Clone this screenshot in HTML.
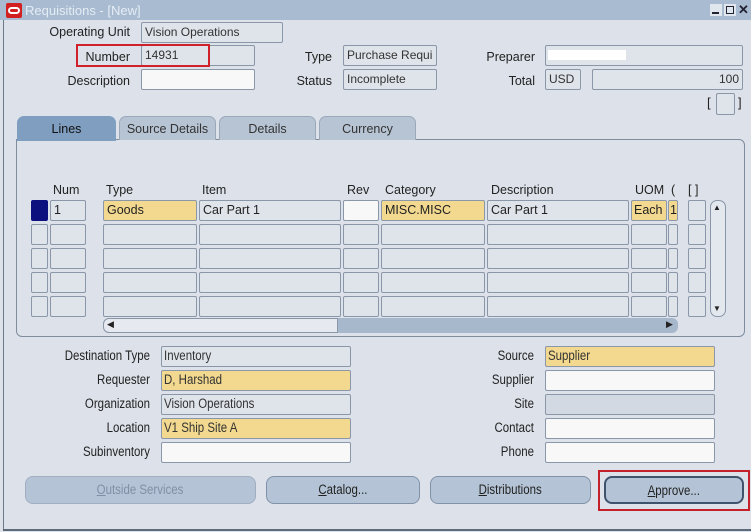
<!DOCTYPE html>
<html><head><style>
*{box-sizing:border-box;margin:0;padding:0}
body{width:751px;height:532px;overflow:hidden;background:#dde2ea;font-family:"Liberation Sans",sans-serif;font-size:12px;color:#222;position:relative}
.a{position:absolute}
.f{position:absolute;height:21px;border:1px solid #8a97a8;border-radius:2px;background:#dfe3ea;padding:2px 3px;font-size:12px;white-space:nowrap;overflow:hidden;color:#333}
.c{position:absolute;height:21px;border:1px solid #8a97a8;border-radius:2px;background:#dfe3ea;padding:2px 3px;font-size:12.5px;overflow:hidden;white-space:nowrap}
.y{background:#f2d98f !important}
.w{background:#f8f8f8 !important}
.l{position:absolute;text-align:right;font-size:12.5px;color:#222}
.ln{position:absolute;text-align:right;font-size:13.5px;color:#222;transform:scaleX(.85);transform-origin:right}
.bf{font-size:13.5px;padding:1px 2px}
.bf span{display:inline-block;transform:scaleX(.85);transform-origin:left}
.tab{position:absolute;top:116px;height:24px;background:#b7c4d4;border:1px solid #9aa8ba;border-bottom:none;border-radius:7px 7px 0 0;text-align:center;padding-top:5px;font-size:12.5px;color:#333}
.btn{position:absolute;top:476px;height:28px;border:1px solid #8092a8;border-radius:8px;background:#b4c4d6;text-align:center;padding-top:5px;font-size:13.5px;color:#222}
.btn span{display:inline-block;transform:scaleX(.85)}
.h{position:absolute;top:183px;font-size:12.5px;color:#222}
</style></head><body>
<div class="a" style="left:0;top:0;width:751px;height:20px;background:#a9bbd0"></div>
<div class="a" style="left:6px;top:3px;width:16px;height:15px;background:#d21f1f;border-radius:2px"><div class="a" style="left:2px;top:4px;width:12px;height:7px;border:2px solid #fff;border-radius:4px"></div></div>
<div class="a" style="left:25px;top:3px;color:#e4ecf4;font-size:13px">Requisitions - [New]</div>
<div class="a" style="left:710px;top:4px;width:12px;height:12px;background:#dfe6ee"><div class="a" style="left:2px;top:8px;width:7px;height:2px;background:#223"></div></div>
<div class="a" style="left:724px;top:4px;width:12px;height:12px;background:#dfe6ee"><div class="a" style="left:2px;top:2px;width:8px;height:8px;border:1.5px solid #223"></div></div>
<div class="a" style="left:738px;top:2px;font-weight:bold;font-size:13px;color:#223">✕</div>
<div class="a" style="left:3px;top:20px;width:1px;height:510px;background:#6d7a8a"></div>
<div class="a" style="left:3px;top:529px;width:748px;height:2px;background:#5d6a7a"></div>

<div class="l" style="left:20px;top:25px;width:110px">Operating Unit</div>
<div class="f" style="left:141px;top:22px;width:142px">Vision Operations</div>
<div class="l" style="left:20px;top:50px;width:110px">Number</div>
<div class="f" style="left:141px;top:45px;width:114px">14931</div>
<div class="a" style="left:76px;top:44px;width:134px;height:23px;border:2px solid #d0202a"></div>
<div class="l" style="left:20px;top:74px;width:110px">Description</div>
<div class="f w" style="left:141px;top:69px;width:114px"></div>

<div class="l" style="left:260px;top:50px;width:72px">Type</div>
<div class="f" style="left:343px;top:45px;width:94px">Purchase Requi</div>
<div class="l" style="left:260px;top:74px;width:72px">Status</div>
<div class="f" style="left:343px;top:69px;width:94px">Incomplete</div>

<div class="l" style="left:450px;top:50px;width:85px">Preparer</div>
<div class="f" style="left:545px;top:45px;width:198px"><div class="a" style="left:2px;top:4px;width:78px;height:10px;background:#fff"></div></div>
<div class="l" style="left:450px;top:74px;width:85px">Total</div>
<div class="f" style="left:545px;top:69px;width:36px">USD</div>
<div class="f" style="left:592px;top:69px;width:151px;text-align:right">100</div>
<div class="a" style="left:707px;top:95px;font-size:13px">[</div>
<div class="f" style="left:716px;top:93px;width:19px;height:22px"></div>
<div class="a" style="left:738px;top:95px;font-size:13px">]</div>

<div class="a" style="left:16px;top:139px;width:729px;height:198px;border:1px solid #7f8c9c;border-radius:0 6px 6px 6px"></div>
<div class="tab" style="left:17px;width:99px;background:#7f9ec0;border-color:#7f9ec0;color:#111">Lines</div>
<div class="tab" style="left:119px;width:97px">Source Details</div>
<div class="tab" style="left:219px;width:97px">Details</div>
<div class="tab" style="left:319px;width:97px">Currency</div>
<div class="a" style="left:17px;top:139px;width:99px;height:2px;background:#7f9ec0"></div>

<div class="h" style="left:53px">Num</div>
<div class="h" style="left:106px">Type</div>
<div class="h" style="left:202px">Item</div>
<div class="h" style="left:347px">Rev</div>
<div class="h" style="left:385px">Category</div>
<div class="h" style="left:491px">Description</div>
<div class="h" style="left:635px">UOM</div>
<div class="h" style="left:671px">(</div>
<div class="h" style="left:688px">[ ]</div>

<div class="a" style="left:31px;top:200px;width:17px;height:21px;background:#0c0f7e;border-radius:2px"></div>
<div class="c" style="left:50px;top:200px;width:36px">1</div>
<div class="c y" style="left:103px;top:200px;width:94px">Goods</div>
<div class="c" style="left:199px;top:200px;width:142px">Car Part 1</div>
<div class="c w" style="left:343px;top:200px;width:36px"></div>
<div class="c y" style="left:381px;top:200px;width:104px">MISC.MISC</div>
<div class="c" style="left:487px;top:200px;width:142px">Car Part 1</div>
<div class="c y" style="left:631px;top:200px;width:36px;padding:2px 2px">Each</div>
<div class="c y" style="left:668px;top:200px;width:10px;padding:2px 1px">1</div>
<div class="c" style="left:688px;top:200px;width:18px"></div>

<div id="rows"></div>
<script>
var r='';[224,248,272,296].forEach(function(t){
[[31,17],[50,36],[103,94],[199,142],[343,36],[381,104],[487,142],[631,36],[668,10],[688,18]].forEach(function(c){
r+='<div class="c" style="left:'+c[0]+'px;top:'+t+'px;width:'+c[1]+'px"></div>';});});
document.getElementById('rows').innerHTML=r;
</script>
<div class="a" style="left:710px;top:200px;width:16px;height:117px;border:1px solid #8a97a8;border-radius:7px;background:#e3e7ee"></div>
<div class="a" style="left:713px;top:203px;font-size:8px">▲</div>
<div class="a" style="left:713px;top:304px;font-size:8px">▼</div>
<div class="a" style="left:103px;top:318px;width:575px;height:15px;background:#a8b8cc;border-radius:6px"></div>
<div class="a" style="left:103px;top:318px;width:235px;height:15px;background:#e6eaf0;border:1px solid #8a97a8;border-radius:6px 0 0 6px"></div>
<div class="a" style="left:107px;top:319px;font-size:9px">◀</div>
<div class="a" style="left:666px;top:319px;font-size:9px">▶</div>

<div class="ln" style="left:20px;top:348px;width:130px">Destination Type</div>
<div class="ln" style="left:20px;top:372px;width:130px">Requester</div>
<div class="ln" style="left:20px;top:396px;width:130px">Organization</div>
<div class="ln" style="left:20px;top:420px;width:130px">Location</div>
<div class="ln" style="left:20px;top:444px;width:130px">Subinventory</div>
<div class="f bf" style="left:161px;top:346px;width:190px"><span>Inventory</span></div>
<div class="f y bf" style="left:161px;top:370px;width:190px"><span>D, Harshad</span></div>
<div class="f bf" style="left:161px;top:394px;width:190px"><span>Vision Operations</span></div>
<div class="f y bf" style="left:161px;top:418px;width:190px"><span>V1 Ship Site A</span></div>
<div class="f w" style="left:161px;top:442px;width:190px"></div>

<div class="ln" style="left:420px;top:348px;width:114px">Source</div>
<div class="ln" style="left:420px;top:372px;width:114px">Supplier</div>
<div class="ln" style="left:420px;top:396px;width:114px">Site</div>
<div class="ln" style="left:420px;top:420px;width:114px">Contact</div>
<div class="ln" style="left:420px;top:444px;width:114px">Phone</div>
<div class="f y bf" style="left:545px;top:346px;width:170px"><span>Supplier</span></div>
<div class="f w" style="left:545px;top:370px;width:170px"></div>
<div class="f" style="left:545px;top:394px;width:170px;background:#d3d9e2"></div>
<div class="f w" style="left:545px;top:418px;width:170px"></div>
<div class="f w" style="left:545px;top:442px;width:170px"></div>

<div class="btn" style="left:25px;width:231px;color:#8090a4;border-color:#a0aec0"><span><u>O</u>utside Services</span></div>
<div class="btn" style="left:266px;width:154px"><span><u>C</u>atalog...</span></div>
<div class="btn" style="left:430px;width:161px"><span><u>D</u>istributions</span></div>
<div class="btn" style="left:604px;width:140px;border:2px solid #3f536c"><span><u>A</u>pprove...</span></div>
<div class="a" style="left:598px;top:470px;width:152px;height:41px;border:2px solid #c4202a"></div>
</body></html>
